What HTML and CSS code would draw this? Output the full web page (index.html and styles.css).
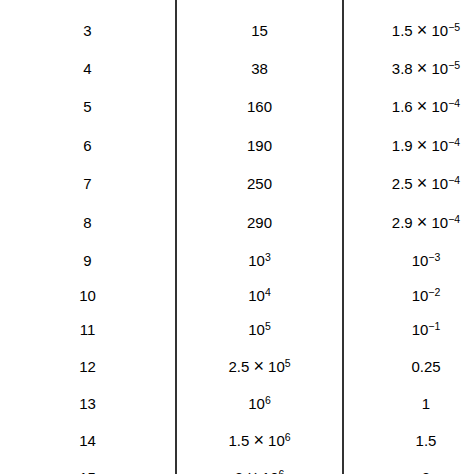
FILE: index.html
```html
<!DOCTYPE html>
<html lang="en">
<head>
<meta charset="utf-8">
<title>Table</title>
<link rel="stylesheet" href="styles.css">
</head>
<body>
<table class="data">
  <colgroup>
    <col class="w1">
    <col class="w2">
    <col class="w3">
  </colgroup>
  <tbody>
    <tr class="lead"><td></td><td class="mid"></td><td class="last"></td></tr>
    <tr class="tall"><td>3</td><td class="mid">15</td><td class="last">1.5 <span class="x">×</span> 10<sup>−5</sup></td></tr>
    <tr class="tall"><td>4</td><td class="mid">38</td><td class="last">3.8 <span class="x">×</span> 10<sup>−5</sup></td></tr>
    <tr class="tall"><td>5</td><td class="mid">160</td><td class="last">1.6 <span class="x">×</span> 10<sup>−4</sup></td></tr>
    <tr class="tall"><td>6</td><td class="mid">190</td><td class="last">1.9 <span class="x">×</span> 10<sup>−4</sup></td></tr>
    <tr class="tall"><td>7</td><td class="mid">250</td><td class="last">2.5 <span class="x">×</span> 10<sup>−4</sup></td></tr>
    <tr class="tall"><td>8</td><td class="mid">290</td><td class="last">2.9 <span class="x">×</span> 10<sup>−4</sup></td></tr>
    <tr class="tall"><td>9</td><td class="mid">10<sup>3</sup></td><td class="last">10<sup>−3</sup></td></tr>
    <tr class="short"><td>10</td><td class="mid">10<sup>4</sup></td><td class="last">10<sup>−2</sup></td></tr>
    <tr class="norm"><td>11</td><td class="mid">10<sup>5</sup></td><td class="last">10<sup>−1</sup></td></tr>
    <tr class="norm"><td>12</td><td class="mid">2.5 <span class="x">×</span> 10<sup>5</sup></td><td class="last">0.25</td></tr>
    <tr class="norm"><td>13</td><td class="mid">10<sup>6</sup></td><td class="last">1</td></tr>
    <tr class="norm"><td>14</td><td class="mid">1.5 <span class="x">×</span> 10<sup>6</sup></td><td class="last">1.5</td></tr>
    <tr class="norm"><td>15</td><td class="mid">2 <span class="x">×</span> 10<sup>6</sup></td><td class="last">2</td></tr>
  </tbody>
</table>
</body>
</html>
```

FILE: styles.css
```css
* { box-sizing: border-box; }

html, body {
  margin: 0;
  padding: 0;
  background: #ffffff;
  overflow: hidden;
  width: 474px;
  height: 474px;
}

.data {
  table-layout: fixed;
  border-collapse: separate;
  border-spacing: 0;
  width: 474px;
  font-family: "Liberation Sans", Arial, Helvetica, sans-serif;
  font-size: 15px;
  line-height: 17px;
  color: #000000;
}

.w1 { width: 175px; }
.w2 { width: 169px; }
.w3 { width: 130px; }

.data td {
  padding: 0;
  text-align: center;
  vertical-align: middle;
  white-space: nowrap;
}

.data td.mid {
  border-left: 2px solid #333333;
  border-right: 2px solid #333333;
}

.data td.last {
  padding-left: 34px;
}

.lead td { height: 11px; }
.tall td { height: 38.4px; }
.short td { height: 31px; }
.norm td { height: 37px; }

.x {
  font-size: 18px;
  line-height: 0;
}

sup {
  font-size: 10.5px;
  line-height: 0;
  vertical-align: 5px;
}
```
